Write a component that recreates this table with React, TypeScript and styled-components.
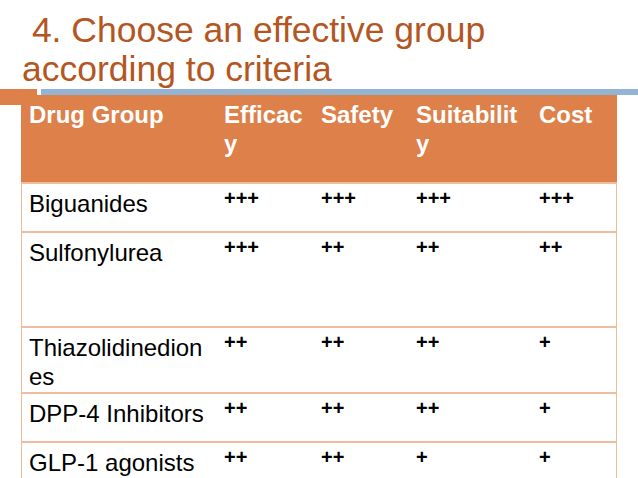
import React from "react";
import styled, { createGlobalStyle } from "styled-components";

const ORANGE = "#dd8049";
const LINE = "#f0bd9c";

const Global = createGlobalStyle`
  html, body { margin: 0; padding: 0; background: #fff; }
  body {
    width: 638px;
    height: 478px;
    overflow: hidden;
    font-family: "Liberation Sans", Arial, sans-serif;
  }
`;

const Slide = styled.div`
  width: 638px;
  height: 478px;
  overflow: hidden;
  background: #fff;
`;

const Title = styled.h1`
  margin: 0;
  padding: 11px 22px 0 22px;
  height: 78px;
  font-weight: 400;
  font-size: 35.5px;
  line-height: 39px;
  color: #b3561f;
  white-space: pre-wrap;
`;

const Rule = styled.div`
  display: flex;
  align-items: flex-start;
  gap: 4px;
  height: 6px;
`;

const OrangeTab = styled.div`
  flex: 0 0 37px;
  height: 16px;
  background: ${ORANGE};
`;

const BlueLine = styled.div`
  flex: 1;
  height: 6px;
  background: #94b4d4;
`;

const Table = styled.div`
  position: relative;
  margin-left: 21px;
  width: 596px;
`;

const HeaderRow = styled.div`
  display: grid;
  grid-template-columns: 195px 97px 95px 123px 86px;
  height: 87px;
  background: ${ORANGE};
  color: #fff;
  font-weight: 700;
`;

const Body = styled.div`
  border-left: 1px solid ${LINE};
  border-right: 1px solid ${LINE};
`;

const Row = styled.div<{ $h: number }>`
  display: grid;
  grid-template-columns: 194px 97px 95px 123px 1fr;
  box-sizing: border-box;
  height: ${(p) => p.$h}px;
  border-top: 2px solid ${LINE};
  color: #000;
`;

const Cell = styled.div`
  padding: 5px 8px 0 8px;
  font-size: 24px;
  line-height: 29px;
  overflow-wrap: anywhere;
`;

const NameCell = styled(Cell)`
  padding-left: 7px;
`;

const Mark = styled.div`
  padding: 5px 8px 0 8px;
  font-size: 20px;
  font-weight: 700;
  line-height: 18px;
`;

const headers = ["Drug Group", "Efficacy", "Safety", "Suitability", "Cost"];

const rows: { name: string; marks: string[]; h: number }[] = [
  { name: "Biguanides", marks: ["+++", "+++", "+++", "+++"], h: 49 },
  { name: "Sulfonylurea", marks: ["+++", "++", "++", "++"], h: 95 },
  { name: "Thiazolidinediones", marks: ["++", "++", "++", "+"], h: 66 },
  { name: "DPP-4 Inhibitors", marks: ["++", "++", "++", "+"], h: 49 },
  { name: "GLP-1 agonists", marks: ["++", "++", "+", "+"], h: 49 },
];

export default function App() {
  return (
    <Slide>
      <Global />
      <Title>{" 4. Choose an effective group according to criteria"}</Title>
      <Rule>
        <OrangeTab />
        <BlueLine />
      </Rule>
      <Table>
        <HeaderRow>
          {headers.map((h) => (
            <Cell key={h}>{h}</Cell>
          ))}
        </HeaderRow>
        <Body>
          {rows.map((r) => (
            <Row key={r.name} $h={r.h}>
              <NameCell>{r.name}</NameCell>
              {r.marks.map((m, i) => (
                <Mark key={i}>{m}</Mark>
              ))}
            </Row>
          ))}
        </Body>
      </Table>
    </Slide>
  );
}
